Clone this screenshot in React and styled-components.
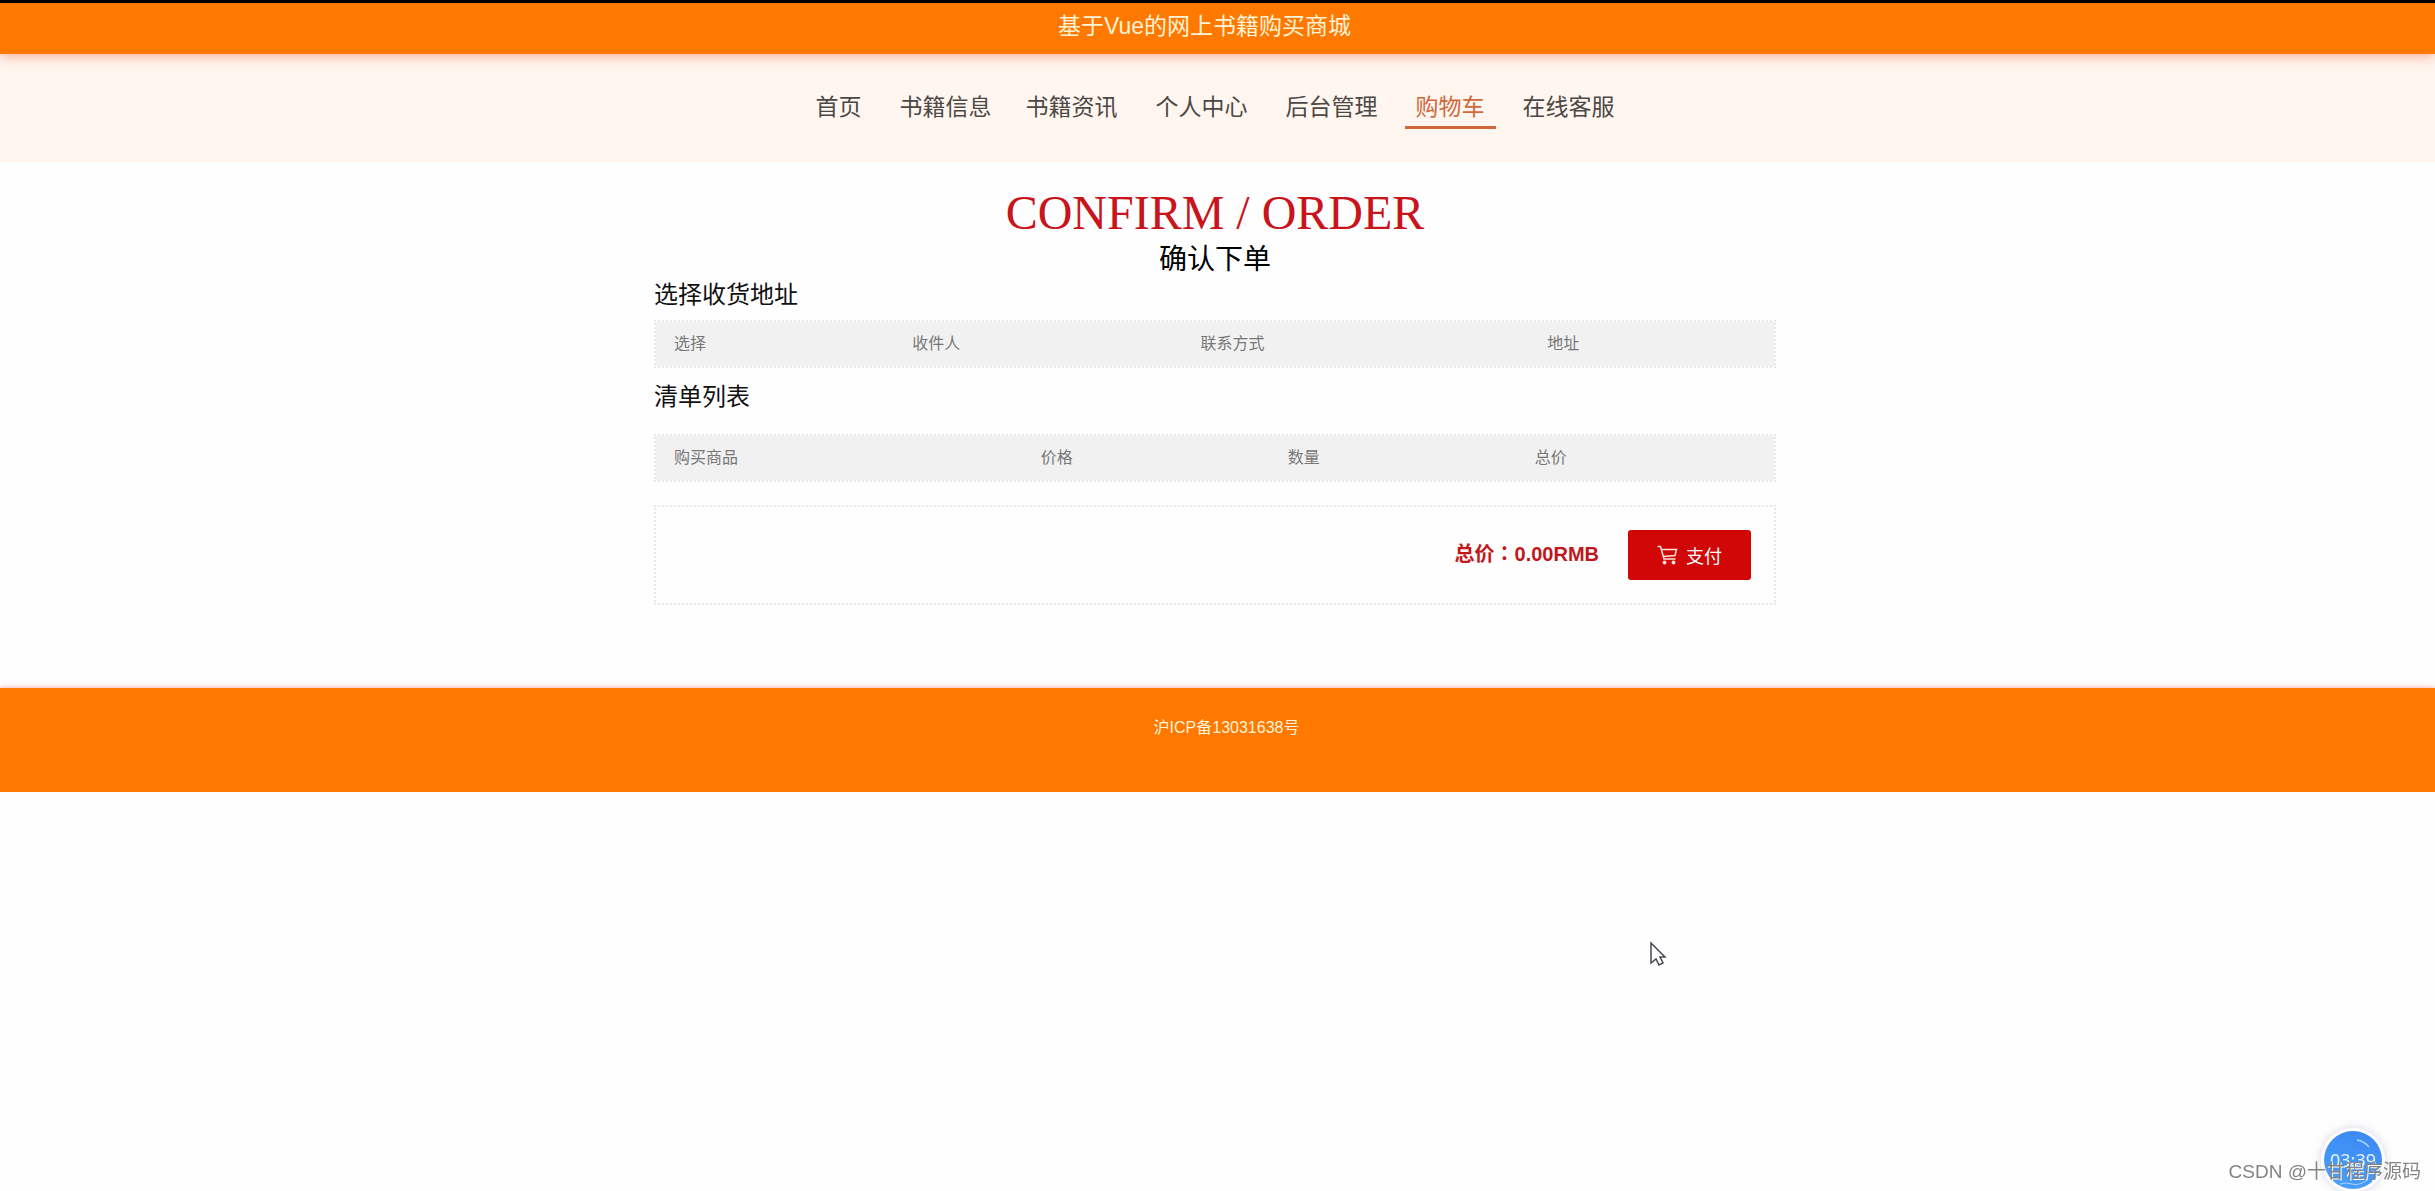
import React from "react";
import styled, { createGlobalStyle } from "styled-components";

const GlobalStyle = createGlobalStyle`
  * {
    box-sizing: border-box;
  }

  body {
    margin: 0;
    background-color: #fefefe;
    font-family: "Liberation Sans", "Noto Sans CJK SC", sans-serif;
    color: #111;
  }
`;

const TopBar = styled.header`
  border-top: 3px solid #000;
  background-color: #ff7800;
  height: 54px;
  padding: 5px 26px 0 0;
  color: #fff4d8;
  font-size: 23px;
  line-height: 36px;
  text-align: center;
  position: relative;
  box-shadow: 0 2px 12px rgba(240, 90, 50, 0.5);
`;

const NavBar = styled.nav`
  display: flex;
  justify-content: center;
  gap: 16px;
  padding: 36px 5px 33px 0;
  background-color: #fff6f0;
`;

const NavGroup = styled.div`
  display: flex;
  gap: 12px;
`;

const NavLink = styled.a`
  padding: 0 11px 2px;
  border-bottom: 3px solid ${({ $active }) => ($active ? "#d0683c" : "transparent")};
  color: ${({ $active }) => ($active ? "#d0683c" : "#4c4845")};
  font-size: 23px;
  line-height: 34px;
  text-decoration: none;
`;

const Content = styled.main`
  width: 100%;
  max-width: 1127px;
  margin: 0 auto;
  padding: 24px 5px 83px 0;
`;

const Title = styled.h1`
  margin: 0;
  color: #c8141a;
  font-family: "Liberation Serif", serif;
  font-size: 48px;
  font-weight: 400;
  line-height: 54px;
  text-align: center;
`;

const Subtitle = styled.p`
  margin: 0;
  padding-top: 2px;
  color: #000;
  font-size: 28px;
  line-height: 36px;
  text-align: center;
`;

const SectionTitle = styled.h2`
  margin: 0;
  font-size: 24px;
  font-weight: 400;
  line-height: 34px;
`;

const Table = styled.table`
  width: 100%;
  margin: ${({ $gap }) => $gap}px 0 12px;
  border: 2px dotted #e9e7ec;
  border-spacing: 0;
  table-layout: fixed;
  background-color: #f2f1f2;
  background-clip: padding-box;
`;

const HeadCell = styled.th`
  width: ${({ $width }) => $width}%;
  height: 44px;
  padding: 0 18px 4px;
  color: #777;
  font-size: 16px;
  font-weight: 400;
  text-align: left;
`;

const Summary = styled.section`
  display: flex;
  align-items: center;
  justify-content: flex-end;
  gap: 29px;
  height: 100px;
  margin-top: 23px;
  padding-right: 23px;
  border: 2px dotted #e9e8ec;
`;

const Total = styled.strong`
  padding-bottom: 6px;
  color: #c0181c;
  font-family: "Liberation Sans", "Noto Sans CJK TC", sans-serif;
  font-size: 20px;
  font-weight: 700;
`;

const PayButton = styled.button`
  display: flex;
  align-items: center;
  justify-content: center;
  gap: 8px;
  width: 123px;
  height: 50px;
  border: none;
  border-radius: 3px;
  background-color: #d10707;
  color: #fff;
  font-family: inherit;
  font-size: 18px;
  cursor: pointer;
`;

const Footer = styled.footer`
  height: 104px;
  padding: 28px 0 0 18px;
  background-color: #ff7800;
  color: #fff4d8;
  font-size: 16px;
  line-height: 24px;
  text-align: center;
  box-shadow: 0 0 5px rgba(240, 60, 60, 0.5);
`;

const Pointer = styled.svg`
  position: absolute;
  left: 1648px;
  top: 941px;
`;

const Timer = styled.div`
  position: fixed;
  right: 53px;
  bottom: 2px;
  width: 58px;
  height: 58px;
  border-radius: 50%;
  background: linear-gradient(200deg, #3b86f2, #4aa2fb);
  box-shadow: 0 0 0 3px #fff, 0 0 8px 3px rgba(90, 90, 150, 0.25);
  color: #e4f1ff;
  font-family: "Noto Sans", sans-serif;
  font-size: 18px;
  line-height: 58px;
  text-align: center;
`;

const TimerShine = styled.svg`
  position: absolute;
  left: 0;
  top: 0;
`;

const Watermark = styled.div`
  position: fixed;
  right: 14px;
  bottom: 4px;
  color: #848484;
  font-size: 19px;
  line-height: 30px;
  text-shadow: 1px 1px 0 #fff;
  white-space: nowrap;
`;

const addressColumns = [
  { label: "选择", width: 21.3 },
  { label: "收件人", width: 25.8 },
  { label: "联系方式", width: 31 },
  { label: "地址", width: 21.9 },
];

const goodsColumns = [
  { label: "购买商品", width: 32.8 },
  { label: "价格", width: 22.1 },
  { label: "数量", width: 22.1 },
  { label: "总价", width: 23 },
];

const HeadTable = ({ columns, gap }) => (
  <Table $gap={gap}>
    <thead>
      <tr>
        {columns.map(({ label, width }) => (
          <HeadCell key={label} $width={width} scope="col">
            {label}
          </HeadCell>
        ))}
      </tr>
    </thead>
  </Table>
);

const CartIcon = () => (
  <svg width="21" height="20" viewBox="0 0 21 20" fill="none" stroke="#ffe3dd" strokeWidth="1.5" aria-hidden="true">
    <path d="M0.500 1.500h3l3.500 12.500h11.500M4.500 4.500h15l-1.500 6-12 1" />
    <circle cx="7.500" cy="17.500" r="1.200" fill="#ffe3dd" />
    <circle cx="16.500" cy="17.500" r="1.200" fill="#ffe3dd" />
  </svg>
);

const App = () => {
  return (
    <>
      <GlobalStyle />
      <TopBar>基于Vue的网上书籍购买商城</TopBar>
      <NavBar>
        <NavLink href="#home">首页</NavLink>
        <NavGroup>
          <NavLink href="#books">书籍信息</NavLink>
          <NavLink href="#news">书籍资讯</NavLink>
        </NavGroup>
        <NavLink href="#center">个人中心</NavLink>
        <NavLink href="#admin">后台管理</NavLink>
        <NavLink href="#cart" $active>购物车</NavLink>
        <NavLink href="#service">在线客服</NavLink>
      </NavBar>

      <Content>
        <Title>CONFIRM / ORDER</Title>
        <Subtitle>确认下单</Subtitle>
        <SectionTitle>选择收货地址</SectionTitle>
        <HeadTable columns={addressColumns} gap={8} />
        <SectionTitle>清单列表</SectionTitle>
        <HeadTable columns={goodsColumns} gap={20} />
        <Summary>
          <Total>总价：0.00RMB</Total>
          <PayButton type="button">
            <CartIcon />
            支付
          </PayButton>
        </Summary>
      </Content>

      <Footer>沪ICP备13031638号</Footer>

      <Pointer width="20" height="28" viewBox="0 0 20 28" aria-hidden="true">
        <path
          d="M3 2v20l5-4 3 6 4-2-3-6h5z"
          fill="#fff"
          stroke="#4a4a52"
          strokeWidth="1.5"
        />
      </Pointer>
      <Timer>
        <TimerShine width="58" height="58" viewBox="0 0 58 58" fill="none" stroke="#a9d2ff" aria-hidden="true">
          <path d="M33 9q7 1 12 7" strokeWidth="1.5" />
          <path d="M16 53q6-2 12 0t14-3" />
        </TimerShine>
        03:39
      </Timer>
      <Watermark>CSDN @十甘程序源码</Watermark>
    </>
  );
};

export default App;
